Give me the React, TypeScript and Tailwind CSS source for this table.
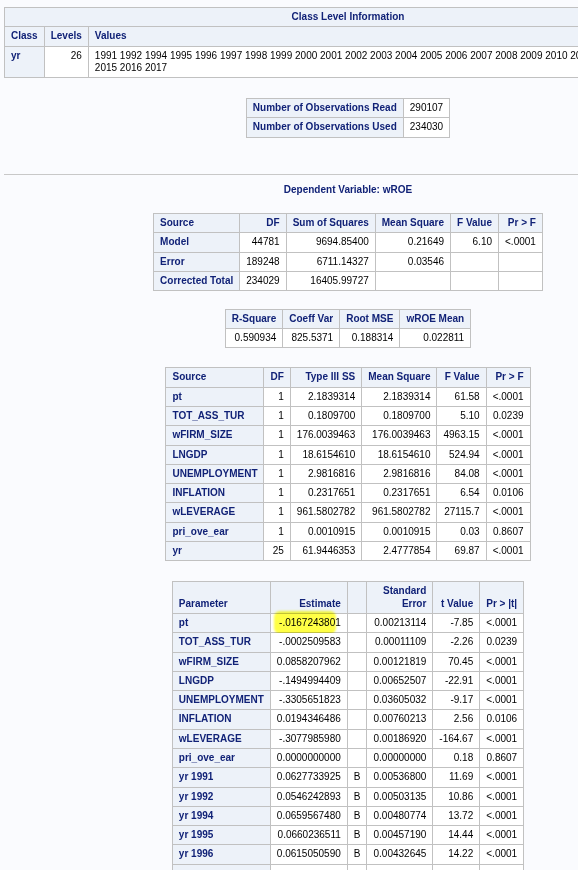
import React from "react";

const TH =
  "border border-[#c1c1c1] bg-[#edf2f9] text-[#112277] font-bold px-[6px] py-[3px] leading-[12.3px] align-bottom whitespace-nowrap text-right";
const THL =
  "border border-[#c1c1c1] bg-[#edf2f9] text-[#112277] font-bold px-[6px] py-[3px] leading-[12.3px] align-bottom whitespace-nowrap text-left";
const RH =
  "border border-[#c1c1c1] bg-[#edf2f9] text-[#112277] font-bold px-[6px] py-[3px] leading-[12.3px] align-top whitespace-nowrap text-left";
const TD =
  "border border-[#c1c1c1] bg-white text-black px-[6px] py-[3px] leading-[12.3px] align-top whitespace-nowrap text-right";
const TDL =
  "border border-[#c1c1c1] bg-white text-black px-[6px] py-[3px] leading-[12.3px] align-top whitespace-nowrap text-left";

const years = [1991, 1992, ...Array.from({ length: 24 }, (_, i) => 1994 + i)];

const typeIII: string[][] = [
  ["pt", "1", "2.1839314", "2.1839314", "61.58", "<.0001"],
  ["TOT_ASS_TUR", "1", "0.1809700", "0.1809700", "5.10", "0.0239"],
  ["wFIRM_SIZE", "1", "176.0039463", "176.0039463", "4963.15", "<.0001"],
  ["LNGDP", "1", "18.6154610", "18.6154610", "524.94", "<.0001"],
  ["UNEMPLOYMENT", "1", "2.9816816", "2.9816816", "84.08", "<.0001"],
  ["INFLATION", "1", "0.2317651", "0.2317651", "6.54", "0.0106"],
  ["wLEVERAGE", "1", "961.5802782", "961.5802782", "27115.7", "<.0001"],
  ["pri_ove_ear", "1", "0.0010915", "0.0010915", "0.03", "0.8607"],
  ["yr", "25", "61.9446353", "2.4777854", "69.87", "<.0001"],
];

const params: string[][] = [
  ["pt", "-.0167243801", "", "0.00213114", "-7.85", "<.0001"],
  ["TOT_ASS_TUR", "-.0002509583", "", "0.00011109", "-2.26", "0.0239"],
  ["wFIRM_SIZE", "0.0858207962", "", "0.00121819", "70.45", "<.0001"],
  ["LNGDP", "-.1494994409", "", "0.00652507", "-22.91", "<.0001"],
  ["UNEMPLOYMENT", "-.3305651823", "", "0.03605032", "-9.17", "<.0001"],
  ["INFLATION", "0.0194346486", "", "0.00760213", "2.56", "0.0106"],
  ["wLEVERAGE", "-.3077985980", "", "0.00186920", "-164.67", "<.0001"],
  ["pri_ove_ear", "0.0000000000", "", "0.00000000", "0.18", "0.8607"],
  ["yr 1991", "0.0627733925", "B", "0.00536800", "11.69", "<.0001"],
  ["yr 1992", "0.0546242893", "B", "0.00503135", "10.86", "<.0001"],
  ["yr 1994", "0.0659567480", "B", "0.00480774", "13.72", "<.0001"],
  ["yr 1995", "0.0660236511", "B", "0.00457190", "14.44", "<.0001"],
  ["yr 1996", "0.0615050590", "B", "0.00432645", "14.22", "<.0001"],
  ["", "\u00a0", "", "", "", ""],
];

export default function App() {
  return (
    <div className="w-[578px] h-[870px] overflow-hidden bg-[#fafbfe] font-['Liberation_Sans',Arial,sans-serif] text-[10px]">
      <div className="w-[696px] px-[4px] pt-[7px] flex flex-col items-center">
        {/* Class Level Information */}
        <table className="w-full border-collapse">
          <tbody>
            <tr>
              <th colSpan={3} className={TH + " !text-center"}>
                Class Level Information
              </th>
            </tr>
            <tr>
              <th className={THL}>Class</th>
              <th className={TH}>Levels</th>
              <th className={THL}>Values</th>
            </tr>
            <tr>
              <th className={RH}>yr</th>
              <td className={TD}>26</td>
              <td className={TDL + " !whitespace-normal w-full"}>{years.join(" ")}</td>
            </tr>
          </tbody>
        </table>

        {/* Observations */}
        <table className="border-collapse mt-[20px]">
          <tbody>
            <tr>
              <th className={RH}>Number of Observations Read</th>
              <td className={TD}>290107</td>
            </tr>
            <tr>
              <th className={RH}>Number of Observations Used</th>
              <td className={TD}>234030</td>
            </tr>
          </tbody>
        </table>

        <div className="self-stretch h-px bg-[#c8c8c8] mt-[36px]" />

        <div className="mt-[9px] leading-[12.3px] font-bold text-[#112277]">Dependent Variable: wROE</div>

        {/* ANOVA */}
        <table className="border-collapse mt-[17px]">
          <tbody>
            <tr>
              <th className={THL}>Source</th>
              <th className={TH}>DF</th>
              <th className={TH}>Sum of Squares</th>
              <th className={TH}>Mean Square</th>
              <th className={TH}>F Value</th>
              <th className={TH}>Pr &gt; F</th>
            </tr>
            <tr>
              <th className={RH}>Model</th>
              <td className={TD}>44781</td>
              <td className={TD}>9694.85400</td>
              <td className={TD}>0.21649</td>
              <td className={TD}>6.10</td>
              <td className={TD}>&lt;.0001</td>
            </tr>
            <tr>
              <th className={RH}>Error</th>
              <td className={TD}>189248</td>
              <td className={TD}>6711.14327</td>
              <td className={TD}>0.03546</td>
              <td className={TD}></td>
              <td className={TD}></td>
            </tr>
            <tr>
              <th className={RH}>Corrected Total</th>
              <td className={TD}>234029</td>
              <td className={TD}>16405.99727</td>
              <td className={TD}></td>
              <td className={TD}></td>
              <td className={TD}></td>
            </tr>
          </tbody>
        </table>

        {/* Fit statistics */}
        <table className="border-collapse mt-[17.5px]">
          <tbody>
            <tr>
              <th className={TH}>R-Square</th>
              <th className={TH}>Coeff Var</th>
              <th className={TH}>Root MSE</th>
              <th className={TH}>wROE Mean</th>
            </tr>
            <tr>
              <td className={TD}>0.590934</td>
              <td className={TD}>825.5371</td>
              <td className={TD}>0.188314</td>
              <td className={TD}>0.022811</td>
            </tr>
          </tbody>
        </table>

        {/* Type III */}
        <table className="border-collapse mt-[19px]">
          <tbody>
            <tr>
              <th className={THL}>Source</th>
              <th className={TH}>DF</th>
              <th className={TH}>Type III SS</th>
              <th className={TH}>Mean Square</th>
              <th className={TH}>F Value</th>
              <th className={TH}>Pr &gt; F</th>
            </tr>
            {typeIII.map((r) => (
              <tr key={r[0]}>
                <th className={RH}>{r[0]}</th>
                {r.slice(1).map((c, i) => (
                  <td key={i} className={TD}>
                    {c}
                  </td>
                ))}
              </tr>
            ))}
          </tbody>
        </table>

        {/* Parameter estimates */}
        <table className="border-collapse mt-[20px]">
          <tbody>
            <tr>
              <th className={THL}>Parameter</th>
              <th className={TH}>Estimate</th>
              <th className={TH}></th>
              <th className={TH}>
                Standard
                <br />
                Error
              </th>
              <th className={TH}>t Value</th>
              <th className={TH}>Pr &gt; |t|</th>
            </tr>
            {params.map((r, idx) => (
              <tr key={idx}>
                <th className={RH}>{r[0]}</th>
                <td className={TD + " relative"}>
                  {idx === 0 && (
                    <span className="absolute left-[3px] top-[-3px] w-[62px] h-[23px] rounded-[6px] bg-[#ffff30] opacity-90 mix-blend-multiply blur-[1px]" />
                  )}
                  <span className="relative">{r[1]}</span>
                </td>
                <td className={TDL}>{r[2]}</td>
                <td className={TD}>{r[3]}</td>
                <td className={TD}>{r[4]}</td>
                <td className={TD}>{r[5]}</td>
              </tr>
            ))}
          </tbody>
        </table>
      </div>
    </div>
  );
}
